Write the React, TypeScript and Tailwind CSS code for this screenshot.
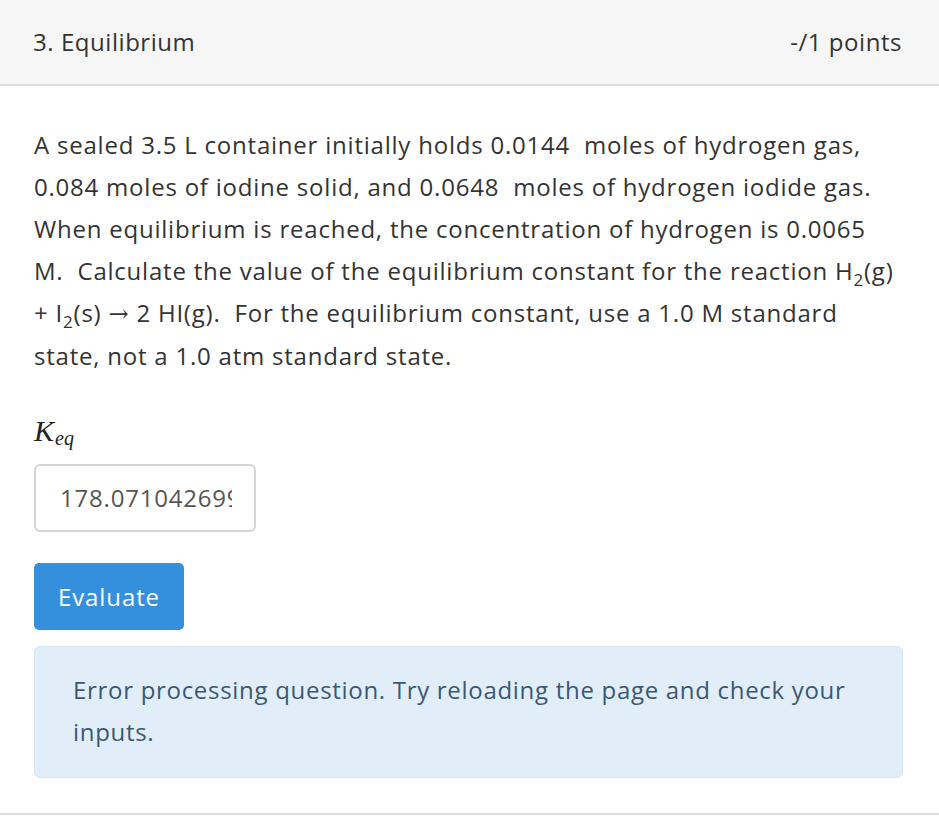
import React from "react";

export default function App() {
  const font = { fontFamily: "'Open Sans', Lato, sans-serif" } as React.CSSProperties;
  const sub = "text-[17px] relative top-[6px] leading-none";
  return (
    <div className="w-[939px] h-[816px] bg-white text-[#333333]" style={font}>
      <div className="border-b-2 border-[#dcdcdc]">
        <div className="h-[86px] bg-[#f6f6f6] border-b-2 border-[#dddddd] flex items-center justify-between pl-[33px] pr-[37px] text-[24px] text-[#333] tracking-[0.55px]">
          <span>3. Equilibrium</span>
          <span>-/1 points</span>
        </div>
        <div className="px-[34px] pt-[38px] pb-[35px]">
          <p className="text-[24px] leading-[42px] tracking-[0.78px] whitespace-nowrap">
            A sealed 3.5 L container initially holds 0.0144&nbsp; moles of hydrogen gas,
            <br />
            0.084 moles of iodine solid, and 0.0648&nbsp; moles of hydrogen iodide gas.
            <br />
            When equilibrium is reached, the concentration of hydrogen is 0.0065
            <br />
            M.&nbsp; Calculate the value of the equilibrium constant for the reaction H<span className={sub}>2</span>(g)
            <br />
            + I<span className={sub}>2</span>(s) <span style={{ fontFamily: "'DejaVu Serif', serif" }} className="text-[24px]">→</span> 2 HI(g).&nbsp; For the equilibrium constant, use a 1.0 M standard
            <br />
            state, not a 1.0 atm standard state.
          </p>
          <div className="mt-[32px] h-[42px] flex items-center text-[30px] text-[#222]" style={{ fontFamily: "'Liberation Serif', 'DejaVu Serif', serif" }}>
            <i>K</i>
            <i className="text-[20px] relative top-[8px] ml-[1px]">eq</i>
          </div>
          <div className="mt-[13px] w-[222px] h-[68px] border-2 border-[#d4d4d4] rounded-[6px] flex items-center pl-[24px] pr-[22px] overflow-hidden">
            <span className="text-[24px] tracking-[0.8px] text-[#555] whitespace-nowrap overflow-hidden block w-full">178.071042699</span>
          </div>
          <button className="mt-[31px] w-[150px] h-[67px] rounded-[5px] bg-[#3490dc] text-white text-[24px] flex items-center justify-center tracking-[0.9px]" style={font}>
            Evaluate
          </button>
          <div className="mt-[16px] w-[869px] bg-[#e1eefa] border border-[#d1e5f7] rounded-[6px] pl-[38px] pr-[30px] pt-[22px] pb-[24px] text-[24px] leading-[42px] tracking-[0.7px] text-[#3a5873] whitespace-nowrap">
            Error processing question. Try reloading the page and check your
            <br />
            inputs.
          </div>
        </div>
      </div>
    </div>
  );
}
